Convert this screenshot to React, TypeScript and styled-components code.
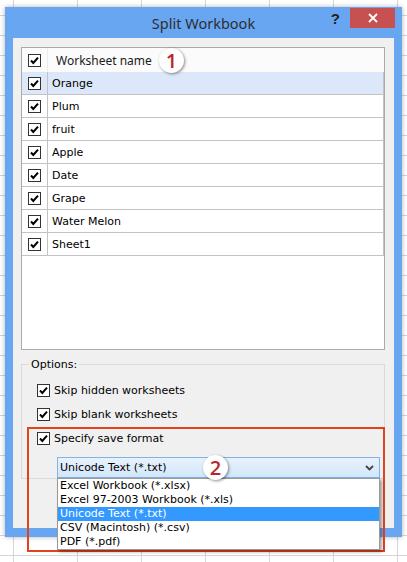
import React, { FC } from 'react';
import styled, { createGlobalStyle } from 'styled-components';

const GlobalStyle = createGlobalStyle`
  html, body {
    margin: 0;
    padding: 0;
  }
  body {
    width: 407px;
    height: 562px;
    overflow: hidden;
    background-color: #ffffff;
    background-image:
      linear-gradient(to right, #d6d6d6 1px, transparent 1px),
      linear-gradient(to bottom, #d6d6d6 1px, transparent 1px);
    background-size: 64px 20px;
    background-position: 13px 15px;
    font-family: 'DejaVu Sans', sans-serif;
    font-size: 11px;
    color: #000;
  }
`;

/** Desktop + window frame */
const Desktop = styled.div`
  padding: 7px 0 0 5px;
`;

const Window = styled.div`
  width: 397px;
  height: 530px;
  box-sizing: border-box;
  display: flex;
  flex-direction: column;
  padding: 0 8px 9px 8px;
  background: #69a6f2;
  box-shadow: 0 0 5px rgba(0, 0, 0, 0.3);
`;

const TitleBar = styled.div`
  height: 31px;
  display: grid;
  grid-template-columns: 1fr auto 1fr;
  align-items: start;
`;

const Title = styled.div`
  grid-column: 2;
  align-self: center;
  font-family: 'Noto Sans', sans-serif;
  font-size: 14.5px;
  color: #2e2e2e;
`;

const TitleButtons = styled.div`
  grid-column: 3;
  justify-self: end;
  display: flex;
  align-items: center;
  gap: 10px;
  margin-top: 1px;
  margin-right: -1px;
`;

const HelpButton = styled.span`
  font-family: 'Liberation Sans', sans-serif;
  font-weight: bold;
  font-size: 15px;
  color: #222;
`;

const CloseButton = styled.div`
  width: 45px;
  height: 20px;
  background: #c75050;
  display: flex;
  align-items: center;
  justify-content: center;
`;

/** Client area */
const Client = styled.div`
  flex: 1;
  position: relative;
  background: #f0f0f0;
  padding: 9px 9px 0 8px;
`;

const ListBox = styled.div`
  height: 303px;
  box-sizing: border-box;
  border: 1px solid #ababab;
  background: #fff;
`;

const HeaderRow = styled.div`
  position: relative;
  height: 24px;
  display: grid;
  grid-template-columns: 26px 1fr;
  background: #fbfbfb;
`;

const HeaderCheckCell = styled.div`
  display: flex;
  align-items: center;
  justify-content: center;
  border-right: 1px solid #ececec;
`;

const HeaderLabel = styled.div`
  display: flex;
  align-items: center;
  padding-left: 8px;
  font-family: 'Noto Sans', sans-serif;
  font-size: 12px;
  color: #1a1a1a;
`;

const Row = styled.div<{ $selected?: boolean }>`
  height: 23px;
  box-sizing: border-box;
  display: grid;
  grid-template-columns: 26px 1fr;
  border-bottom: 1px solid #c3c3c3;
  border-right: 1px solid #c3c3c3;
  background: ${(p) => (p.$selected ? '#dce7fa' : '#fff')};
`;

const CheckCell = styled.div`
  display: flex;
  align-items: center;
  justify-content: center;
  border-right: 1px solid #c3c3c3;
`;

const NameCell = styled.div`
  display: flex;
  align-items: center;
  padding-left: 4px;
`;

const BoxOuter = styled.span`
  width: 13px;
  height: 13px;
  box-sizing: border-box;
  border: 1px solid #333;
  background: #fff;
  display: inline-flex;
  align-items: center;
  justify-content: center;
  flex: none;
`;

const Check: FC = () => (
  <BoxOuter>
    <svg width="11" height="11" viewBox="0 0 11 11">
      <path d="M2 5.5 L4.3 8 L9 2.6" fill="none" stroke="#000" strokeWidth="2" />
    </svg>
  </BoxOuter>
);

/** Options group */
const Group = styled.fieldset`
  margin: 8px 0 0 0;
  padding: 7px 0 0 15px;
  border: 1px solid #dadada;
  min-width: 0;
`;

const Legend = styled.legend`
  margin-left: -8px;
  padding: 0 2px;
  line-height: 13px;
`;

const OptionRow = styled.label`
  height: 24px;
  display: flex;
  align-items: center;
  gap: 4px;
`;

const ComboWrap = styled.div`
  position: relative;
  width: 323px;
  margin: 7px 0 0 20px;
`;

const Combo = styled.div`
  height: 21px;
  box-sizing: border-box;
  display: flex;
  align-items: center;
  justify-content: space-between;
  padding: 0 5px 0 2px;
  border: 1px solid #7eb4ea;
  background: linear-gradient(#e8f2fc, #d2e6fb);
`;

const DropList = styled.ul`
  position: absolute;
  top: 100%;
  left: 0;
  right: 0;
  z-index: 3;
  margin: 0;
  padding: 0;
  list-style: none;
  background: #fff;
  border: 1px solid #9a9a9a;
  box-shadow: 2px 2px 3px rgba(0, 0, 0, 0.35);
`;

const DropItem = styled.li<{ $active?: boolean }>`
  height: 14px;
  line-height: 14px;
  padding-left: 2px;
  background: ${(p) => (p.$active ? '#3399ff' : 'transparent')};
  color: ${(p) => (p.$active ? '#fff' : '#000')};
`;

/** Annotations */
const Highlight = styled.div`
  position: absolute;
  left: 14px;
  top: 389px;
  width: 358px;
  height: 125px;
  box-sizing: border-box;
  border: 2px solid #e2431e;
  z-index: 1;
`;

const Badge = styled.div<{ $left: number; $top: number }>`
  position: absolute;
  left: ${(p) => p.$left}px;
  top: ${(p) => p.$top}px;
  z-index: 4;
  width: 25px;
  height: 25px;
  border-radius: 50%;
  background: #fff;
  box-shadow: 1px 1px 3px rgba(0, 0, 0, 0.45);
  display: flex;
  align-items: center;
  justify-content: center;
  font-family: 'Open Sans', sans-serif;
  font-weight: 600;
  font-size: 20px;
  color: #b8262b;
`;

const sheets = ['Orange', 'Plum', 'fruit', 'Apple', 'Date', 'Grape', 'Water Melon', 'Sheet1'];
const formats = [
  'Excel Workbook (*.xlsx)',
  'Excel 97-2003 Workbook (*.xls)',
  'Unicode Text (*.txt)',
  'CSV (Macintosh) (*.csv)',
  'PDF (*.pdf)',
];

const App: FC = () => {
  return (
    <>
      <GlobalStyle />
      <Desktop>
        <Window>
          <TitleBar>
            <Title>Split Workbook</Title>
            <TitleButtons>
              <HelpButton>?</HelpButton>
              <CloseButton>
                <svg width="10" height="10" viewBox="0 0 10 10">
                  <path d="M1 1 L9 9 M9 1 L1 9" stroke="#fff" strokeWidth="1.8" />
                </svg>
              </CloseButton>
            </TitleButtons>
          </TitleBar>

          <Client>
            <ListBox>
              <HeaderRow>
                <HeaderCheckCell>
                  <Check />
                </HeaderCheckCell>
                <HeaderLabel>Worksheet name</HeaderLabel>
                <Badge $left={137} $top={0}>1</Badge>
              </HeaderRow>
              {sheets.map((name, i) => (
                <Row key={name} $selected={i === 0}>
                  <CheckCell>
                    <Check />
                  </CheckCell>
                  <NameCell>{name}</NameCell>
                </Row>
              ))}
            </ListBox>

            <Group>
              <Legend>Options:</Legend>
              <OptionRow>
                <Check />
                Skip hidden worksheets
              </OptionRow>
              <OptionRow>
                <Check />
                Skip blank worksheets
              </OptionRow>
              <OptionRow>
                <Check />
                Specify save format
              </OptionRow>
              <ComboWrap>
                <Combo>
                  <span>Unicode Text (*.txt)</span>
                  <svg width="9" height="6" viewBox="0 0 9 6">
                    <path d="M1 1 L4.5 4.5 L8 1" fill="none" stroke="#444" strokeWidth="1.8" />
                  </svg>
                </Combo>
                <Badge $left={146} $top={-2}>2</Badge>
                <DropList>
                  {formats.map((f) => (
                    <DropItem key={f} $active={f === 'Unicode Text (*.txt)'}>
                      {f}
                    </DropItem>
                  ))}
                </DropList>
              </ComboWrap>
            </Group>

            <Highlight />
          </Client>
        </Window>
      </Desktop>
    </>
  );
};

export default App;
